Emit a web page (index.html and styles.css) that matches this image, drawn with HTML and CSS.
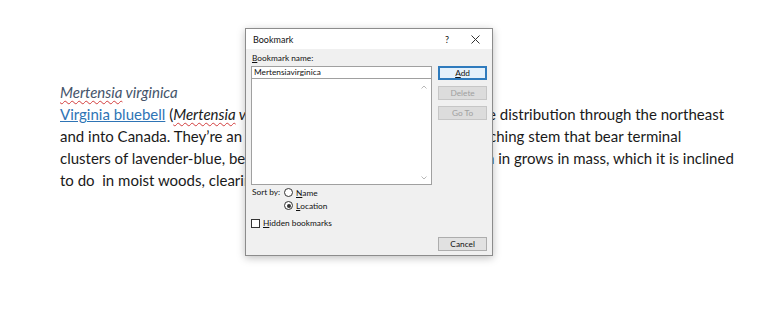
FILE: index.html
```html
<!DOCTYPE html>
<html lang="en">
<head>
    <meta charset="UTF-8">
    <title>Bookmark</title>
    <link rel="stylesheet" href="styles.css">
</head>
<body>
    <div class="doc">
        <div class="title"><span class="squiggle">Mertensia</span> virginica</div>
        <div class="line">
            <div class="left"><a href="#" class="link">Virginia bluebell</a> (<i><span class="squiggle">Mertensia</span> v</i></div>
            <div class="right">e distribution through the northeast</div>
        </div>
        <div class="line">
            <div class="left">and into Canada. They’re an e</div>
            <div class="right r3">ching stem that bear terminal</div>
        </div>
        <div class="line">
            <div class="left">clusters of lavender-blue, bel</div>
            <div class="right r4">n in grows in mass, which it is inclined</div>
        </div>
        <div class="line">
            <div class="left">to do&nbsp; in moist woods, clearin</div>
        </div>
    </div>

    <!-- dialog floats over the document -->
    <div class="dialog">
        <div class="titlebar">
            <span class="caption">Bookmark</span>
            <span class="help">?</span>
            <svg class="close" width="9" height="9" viewBox="0 0 9 9">
                <path d="M0.5 0.5 L8.5 8.5 M8.5 0.5 L0.5 8.5" stroke="#333" stroke-width="1" fill="none"/>
            </svg>
        </div>
        <div class="dlg-body">
            <div class="main">
                <div class="label"><u>B</u>ookmark name:</div>
                <div class="input">Mertensiavirginica</div>
                <div class="list">
                    <svg class="arrow up" width="6" height="4" viewBox="0 0 6 4">
                        <path d="M0.5 3.5 L3 1 L5.5 3.5" stroke="#b8b8b8" fill="none"/>
                    </svg>
                    <svg class="arrow down" width="6" height="4" viewBox="0 0 6 4">
                        <path d="M0.5 0.5 L3 3 L5.5 0.5" stroke="#b8b8b8" fill="none"/>
                    </svg>
                </div>
                <div class="sort">
                    <span class="sort-label">Sort by:</span>
                    <div class="options">
                        <div class="opt"><span class="radio"></span><u>N</u>ame</div>
                        <div class="opt"><span class="radio on"></span><u>L</u>ocation</div>
                    </div>
                </div>
                <div class="check"><span class="box"></span><u>H</u>idden bookmarks</div>
            </div>
            <div class="buttons">
                <div class="btn default"><u>A</u>dd</div>
                <div class="btn disabled">Delete</div>
                <div class="btn disabled">Go To</div>
                <div class="btn cancel">Cancel</div>
            </div>
        </div>
    </div>
</body>
</html>
```

FILE: styles.css
```css
:root {
    --doc-text: #1a1a1a;
    --title: #44546a;
    --link: #2e74b5;
    --dlg-bg: #f0f0f0;
    --dlg-text: #111111;
    --btn-border: #adadad;
}

body {
    margin: 0;
    background: #ffffff;
    font-family: 'Lato', 'Open Sans', sans-serif;
}

.doc {
    padding: 81px 0 0 60px;
    color: var(--doc-text);
    font-size: 15px;
    line-height: 22px;
}

/* the dialog hides the middle of each line */
.line {
    display: grid;
    grid-template-columns: 428px max-content;
    width: max-content;
    white-space: nowrap;
}

.title {
    font-style: italic;
    color: var(--title);
}

.right.r3 { margin-left: 1px; }
.right.r4 { margin-left: -2px; }

.link {
    color: var(--link);
    text-decoration: underline;
}

.squiggle {
    text-decoration: underline wavy #d23c3c;
    text-decoration-thickness: 1px;
    text-underline-offset: 2px;
}

.dialog {
    position: absolute;
    left: 245px;
    top: 28px;
    width: 246px;
    height: 226px;
    border: 1px solid #8c8c8c;
    box-shadow: 0 2px 8px rgba(0, 0, 0, 0.25);
    background: var(--dlg-bg);
    font-family: 'Lato', 'Noto Sans', sans-serif;
    font-size: 8.3px;
    color: var(--dlg-text);
    display: flex;
    flex-direction: column;
}

.titlebar {
    height: 20px;
    background: #ffffff;
    display: flex;
    align-items: center;
    padding: 0 12px 0 7px;
    font-size: 9px;
}

.caption {
    flex: 1;
}

.help {
    margin-right: 22px;
}

.close {
    display: block;
}

.dlg-body {
    flex: 1;
    display: flex;
    gap: 6px;
    padding: 3px 5px 0 5px;
}

.main {
    width: 182px;
    display: flex;
    flex-direction: column;
}

.label {
    padding-left: 1px;
    height: 13px;
    line-height: 13px;
}

.input {
    margin-top: 1px;
    height: 11px;
    line-height: 11px;
    border: 1px solid #a0a0a0;
    border-bottom: none;
    background: #ffffff;
    padding-left: 2px;
}

.list {
    position: relative;
    height: 105px;
    border: 1px solid #a0a0a0;
    background: #ffffff;
}

.arrow {
    position: absolute;
    right: 4px;
}

.arrow.up { top: 6px; }
.arrow.down { bottom: 4px; }

.sort {
    display: flex;
    margin-top: 1px;
}

.sort-label {
    width: 32px;
    padding-left: 1px;
    line-height: 13px;
}

.options {
    display: flex;
    flex-direction: column;
}

.opt {
    display: flex;
    align-items: center;
    height: 13px;
}

.radio {
    width: 7px;
    height: 7px;
    border: 1px solid #333;
    border-radius: 50%;
    background: #ffffff;
    margin-right: 3px;
    display: flex;
    align-items: center;
    justify-content: center;
}

.radio.on::after {
    content: "";
    width: 4px;
    height: 4px;
    border-radius: 50%;
    background: #333;
}

.check {
    display: flex;
    align-items: center;
    margin-top: 5px;
    height: 12px;
}

.box {
    width: 7px;
    height: 7px;
    border: 1px solid #333;
    background: #ffffff;
    margin-right: 3px;
}

.buttons {
    width: 49px;
    display: flex;
    flex-direction: column;
    gap: 6px;
    padding-top: 14px;
}

.btn {
    height: 12px;
    line-height: 12px;
    text-align: center;
    border: 1px solid var(--btn-border);
    background: #e1e1e1;
}

.btn.default {
    border: 1px solid #2f7bbd;
    box-shadow: inset 0 0 0 1px #2f7bbd;
    background: #e5f1fb;
}

.btn.disabled {
    color: #a0a0a0;
    border-color: #c6c6c6;
    background: #dcdcdc;
}

.btn.cancel {
    margin-top: auto;
    margin-bottom: 4px;
}
```
